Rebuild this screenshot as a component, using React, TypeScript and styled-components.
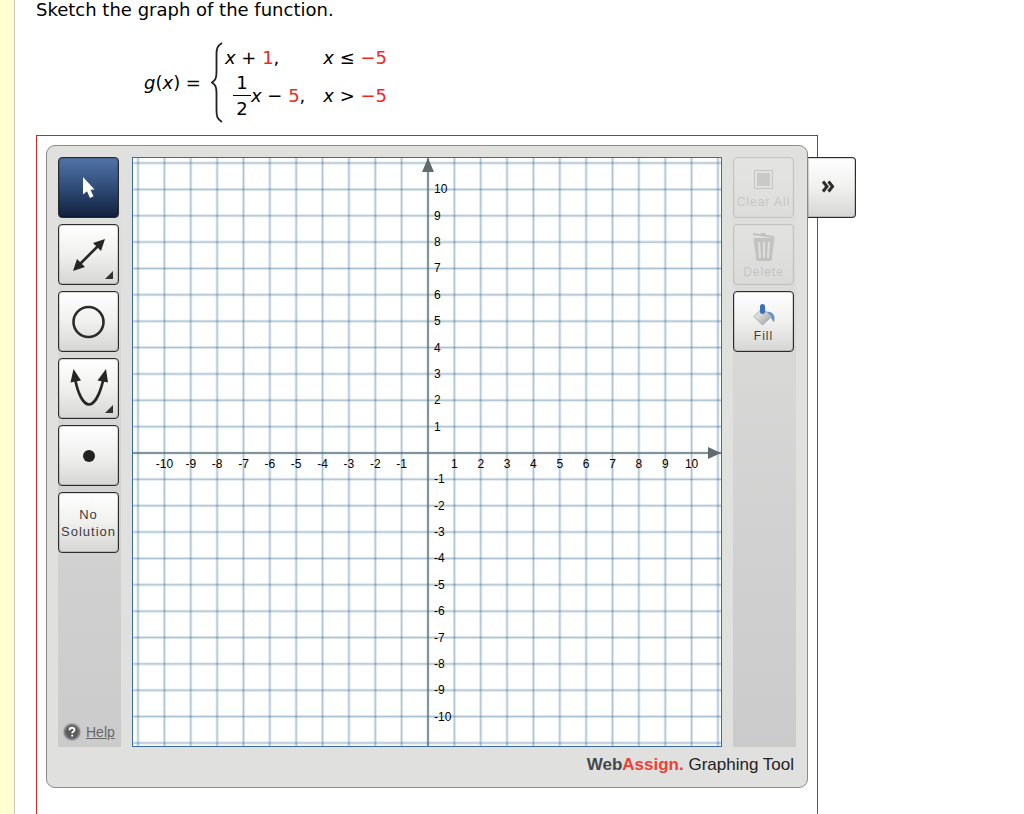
import React from 'react';
import styled, { createGlobalStyle, css } from 'styled-components';

const GlobalStyle = createGlobalStyle`
  *, *::before, *::after { box-sizing: border-box; }
  body {
    margin: 0;
    background: #fff;
    color: #000;
    font-family: Verdana, "DejaVu Sans", sans-serif;
    font-size: 18px;
  }
`;

const Page = styled.div`
  display: flex;
  min-height: 100vh;
`;

const Margin = styled.div`
  flex: none;
  width: 15px;
  background: #ffffcf;
  border-right: 1px solid #c4c4c4;
`;

const Question = styled.main`
  flex: 1;
  min-width: 0;
  display: flex;
  flex-direction: column;
  padding: 0 20px 0 21px;
`;

const Prompt = styled.p`
  margin: 0;
  line-height: 20px;
`;

const Equation = styled.div`
  display: flex;
  align-items: center;
  gap: 10px;
  margin: 22px 0 12px 108px;
  height: 81px;
  line-height: 20px;
  white-space: nowrap;
`;

const Cases = styled.div`
  display: flex;
  align-items: center;
`;

const CaseGrid = styled.div`
  display: grid;
  grid-template-columns: auto auto;
  column-gap: 18px;
  row-gap: 2px;
  align-items: center;
  padding-top: 4px;
`;

const Term = styled.span<{ $indent?: boolean }>`
  display: flex;
  align-items: center;
  white-space: pre;
  padding-left: ${(p) => (p.$indent ? 8 : 0)}px;
`;

const Given = styled.span`
  color: #f0281e;
`;

const Fraction = styled.span`
  display: flex;
  flex-direction: column;
  align-items: center;
  width: 18px;
  line-height: 25px;
`;

const Numerator = styled.span`
  width: 100%;
  text-align: center;
  border-bottom: 1px solid #000;
`;

const Frame = styled.section`
  flex: 1;
  width: 100%;
  max-width: 782px;
  padding: 9px;
  border: 1px solid #c9281f;
  border-bottom: 0;
`;

const Panel = styled.div`
  position: relative;
  padding: 11px;
  background: #e0e0de;
  border: 1px solid #8b8b8b;
  border-radius: 9px;
  font-family: Arial, "Liberation Sans", sans-serif;
`;

const Workspace = styled.div`
  display: flex;
  gap: 11px;
`;

const ToolColumn = styled.div`
  flex: none;
  display: flex;
  flex-direction: column;
  gap: 6px;
  width: 63px;
  background: linear-gradient(#e0e0de, #d2d2d2 60%, #cbcbcb);
`;

const buttonFace = css`
  background: linear-gradient(#fff, #f0f0ef 50%, #d6d6d4);
  border: 1px solid #2c2c2c;
  box-shadow: inset 0 0 0 1px rgba(0, 0, 0, 0.15);
`;

const ToolButton = styled.button<{ $active?: boolean; $captioned?: boolean }>`
  ${buttonFace}
  position: relative;
  display: flex;
  flex-direction: column;
  align-items: center;
  justify-content: center;
  width: 61px;
  height: 61px;
  padding: ${(p) => (p.$captioned ? '4px 0 0' : '0')};
  border-radius: 4px;
  color: #3c3c3c;
  font-family: inherit;
  font-size: ${(p) => (p.$captioned ? 12 : 13)}px;
  letter-spacing: 1px;
  line-height: 17px;
  ${(p) => p.$active && css`background: linear-gradient(#5273a8, #33507d 45%, #10213e);`}
  &:disabled {
    opacity: 0.15;
  }
  svg { display: block; }
`;

const Corner = styled.svg`
  position: absolute;
  right: 5px;
  bottom: 5px;
`;

const Graph = styled.svg`
  display: block;
  flex: 1;
  min-width: 0;
  aspect-ratio: 1;
  font-family: Arial, "Liberation Sans", sans-serif;
  font-size: 12px;
`;

const HelpLink = styled.a`
  display: flex;
  align-items: center;
  gap: 4px;
  margin-top: auto;
  padding: 0 0 5px 4px;
  color: #666;
  font-size: 14px;
  line-height: 20px;
`;

const Footer = styled.footer`
  padding: 8px 2px 1px;
  text-align: right;
  font-size: 17px;
  line-height: 20px;
  color: #222;
`;

const Brand = styled.strong<{ $red?: boolean }>`
  color: ${(p) => (p.$red ? '#ee4036' : '#45484d')};
`;

const Expand = styled.button`
  ${buttonFace}
  position: absolute;
  left: calc(100% + 1px);
  top: 11px;
  display: flex;
  align-items: center;
  justify-content: center;
  width: 48px;
  height: 61px;
  padding: 0 8px 2px 0;
  border-left: 0;
  border-radius: 0 4px 4px 0;
`;

const STEP = 26.36;
const CX = 296;
const CY = 296;
const lines = Array.from({ length: 23 }, (_, i) => i - 11);
const labels = lines.filter((n) => n !== 0 && Math.abs(n) <= 10);

function GridLines() {
  return (
    <>
      {lines.map((n) => (
        <React.Fragment key={n}>
          <line x1={CX + n * STEP} x2={CX + n * STEP} y1="1" y2="589" />
          <line y1={CY + n * STEP} y2={CY + n * STEP} x1="1" x2="589" />
        </React.Fragment>
      ))}
    </>
  );
}

function CoordinatePlane() {
  return (
    <Graph viewBox="0 0 590 590" role="img" aria-label="Coordinate plane from -10 to 10">
      <rect x="0.5" y="0.5" width="589" height="589" fill="#fff" stroke="#3a6ba5" />
      <g stroke="#26648f" strokeOpacity="0.16" strokeWidth="3">
        <GridLines />
      </g>
      <g stroke="#26648f" strokeOpacity="0.28" strokeWidth="1">
        <GridLines />
      </g>
      <g stroke="#5f7275" strokeOpacity="0.65" strokeWidth="2">
        <line x1={CX} x2={CX} y1="1" y2="589" />
        <line x1="1" x2="589" y1={CY} y2={CY} />
      </g>
      <path d="M296 1l6 14h-12z M589 296l-13-6v12z" fill="#626b6d" />
      {labels.map((n) => (
        <React.Fragment key={n}>
          <text x={CX + n * STEP} y="311" textAnchor="middle">{n}</text>
          <text x="302" y={CY - n * STEP + 4}>{n}</text>
        </React.Fragment>
      ))}
    </Graph>
  );
}

function CornerMark() {
  return (
    <Corner width="8" height="8" viewBox="0 0 8 8" aria-hidden="true">
      <path d="M8 0v8H0z" fill="#333" />
    </Corner>
  );
}

export default function App() {
  return (
    <>
      <GlobalStyle />
      <Page>
        <Margin />
        <Question>
          <Prompt>Sketch the graph of the function.</Prompt>
          <Equation>
            <span><i>g</i>(<i>x</i>) =</span>
            <Cases>
              <svg width="14" height="81" viewBox="0 0 14 81" aria-hidden="true">
                <path d="M11 1C6 4 5.500 7 5.500 13v17c0 6-1 8-4.500 10.500c3.500 2.500 4.500 4.500 4.500 10.500v17c0 6 .500 9 5.500 12" fill="none" stroke="#222" strokeWidth="1.800" />
              </svg>
              <CaseGrid>
                <Term><i>x</i> + <Given>1</Given>,</Term>
                <Term><i>x</i> ≤ <Given>−5</Given></Term>
                <Term $indent>
                  <Fraction><Numerator>1</Numerator><span>2</span></Fraction>
                  <i>x</i> − <Given>5</Given>,
                </Term>
                <Term><i>x</i> &gt; <Given>−5</Given></Term>
              </CaseGrid>
            </Cases>
          </Equation>
          <Frame>
            <Panel>
              <Workspace>
                <ToolColumn>
                  <ToolButton $active aria-label="Select">
                    <svg width="16" height="24" viewBox="0 0 16 24">
                      <path d="M2 1l11.500 12.500-4 .200 3 6.500-3.500 1.800-3-6.700L2 18.500z" fill="#fff" />
                    </svg>
                  </ToolButton>
                  <ToolButton aria-label="Line">
                    <svg width="34" height="34" viewBox="0 0 34 34">
                      <path d="M6 28L28 6" stroke="#262626" strokeWidth="2.600" />
                      <path d="M33 1l-4 12-8-8zM1 33l4-12 8 8z" fill="#262626" />
                    </svg>
                    <CornerMark />
                  </ToolButton>
                  <ToolButton aria-label="Circle">
                    <svg width="34" height="34" viewBox="0 0 34 34">
                      <circle cx="16.500" cy="17" r="15" fill="none" stroke="#2b2b2b" strokeWidth="2.600" />
                    </svg>
                  </ToolButton>
                  <ToolButton aria-label="Parabola">
                    <svg width="40" height="40" viewBox="0 0 40 40">
                      <path d="M6.500 12C9 24 14 35.500 20 35.500S31 24 34 12" fill="none" stroke="#262626" strokeWidth="2.700" />
                      <path d="M4.500 0l7.500 11.500L1.500 13.500zM37 0l2 13.500-10.500-2z" fill="#262626" />
                    </svg>
                    <CornerMark />
                  </ToolButton>
                  <ToolButton aria-label="Point">
                    <svg width="14" height="14" viewBox="0 0 14 14">
                      <circle cx="7" cy="7" r="6" fill="#222" />
                    </svg>
                  </ToolButton>
                  <ToolButton>No Solution</ToolButton>
                  <HelpLink href="#help">
                    <svg width="20" height="20" viewBox="0 0 20 20" aria-hidden="true">
                      <circle cx="10" cy="10" r="9.500" fill="#bdbdbd" />
                      <circle cx="10" cy="10" r="8.300" fill="#808080" />
                      <circle cx="10" cy="10" r="6.500" fill="#5a5a5a" />
                      <path d="M7.500 8.200c0-3.300 5.200-3.100 5-.300-.1 1.700-2.300 1.600-2.300 3.400M10.200 12.700v1.900" fill="none" stroke="#fff" strokeWidth="1.900" />
                    </svg>
                    Help
                  </HelpLink>
                </ToolColumn>
                <CoordinatePlane />
                <ToolColumn>
                  <ToolButton $captioned disabled>
                    <svg width="22" height="26" viewBox="0 0 22 26">
                      <rect x="1.500" y="2.500" width="18" height="18" fill="#eee" stroke="#333" />
                      <rect x="4" y="5" width="13" height="13" fill="#555" />
                    </svg>
                    Clear All
                  </ToolButton>
                  <ToolButton $captioned disabled>
                    <svg width="24" height="32" viewBox="0 0 24 32">
                      <path d="M1 2l21 3M9 1.500l5 1" fill="none" stroke="#222" strokeWidth="1.800" />
                      <path d="M1.500 6h21l-3 23h-15z" fill="#333" />
                      <path d="M7 10l1 16M12 10v16M17 10l-1 16" stroke="#eee" strokeWidth="2" />
                    </svg>
                    Delete
                  </ToolButton>
                  <ToolButton $captioned>
                    <svg width="24" height="25" viewBox="0 0 24 25">
                      <defs>
                        <linearGradient id="bucket" x1="0" y1="0" x2="1" y2="1">
                          <stop offset="0" stopColor="#fff" />
                          <stop offset="1" stopColor="#999" />
                        </linearGradient>
                      </defs>
                      <path d="M14 9c6-1 10 3 8 10-2-1-2-5-6-6z" fill="#5d93c8" />
                      <path d="M10.500 5l9 8.500-9 8.500-8.500-8.500z" fill="url(#bucket)" stroke="#aaa" />
                      <rect x="8" y="1" width="5" height="10" rx="2.500" fill="#3f6fb8" />
                    </svg>
                    Fill
                  </ToolButton>
                </ToolColumn>
              </Workspace>
              <Footer>
                <Brand>Web</Brand><Brand $red>Assign.</Brand> Graphing Tool
              </Footer>
              <Expand aria-label="Expand panel">
                <svg width="14" height="13" viewBox="0 0 14 13">
                  <path d="M2 1.500l4 5-4 5M7.500 1.500l4 5-4 5" fill="none" stroke="#2c2c2c" strokeWidth="3" />
                </svg>
              </Expand>
            </Panel>
          </Frame>
        </Question>
      </Page>
    </>
  );
}
